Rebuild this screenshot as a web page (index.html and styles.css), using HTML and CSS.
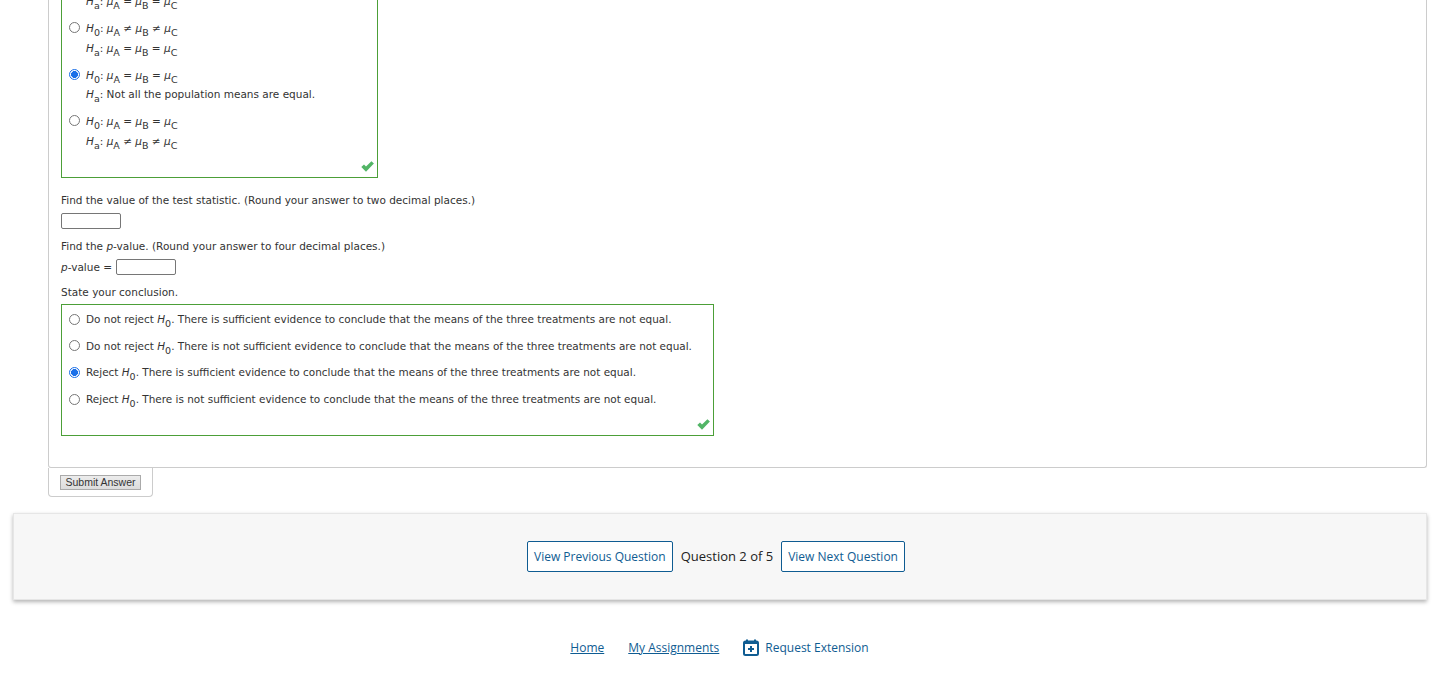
FILE: index.html
```html
<!DOCTYPE html>
<html lang="en">
  <head>
    <meta charset="UTF-8" />
    <title>Question 2 of 5</title>
    <link rel="stylesheet" href="styles.css">
  </head>
  <body>
    <div class="page">
      <div class="question-card">
        <div class="answer-box hypotheses">
          <div class="option partial">
            <div class="option-text">
              <div class="math-line"><i>H</i><sub>a</sub>: <i>μ</i><sub>A</sub> = <i>μ</i><sub>B</sub> = <i>μ</i><sub>C</sub></div>
            </div>
          </div>
          <div class="option">
            <span class="radio"></span>
            <div class="option-text">
              <div class="math-line"><i>H</i><sub>0</sub>: <i>μ</i><sub>A</sub> ≠ <i>μ</i><sub>B</sub> ≠ <i>μ</i><sub>C</sub></div>
              <div class="math-line"><i>H</i><sub>a</sub>: <i>μ</i><sub>A</sub> = <i>μ</i><sub>B</sub> = <i>μ</i><sub>C</sub></div>
            </div>
          </div>
          <div class="option">
            <span class="radio checked"></span>
            <div class="option-text">
              <div class="math-line"><i>H</i><sub>0</sub>: <i>μ</i><sub>A</sub> = <i>μ</i><sub>B</sub> = <i>μ</i><sub>C</sub></div>
              <div class="math-line short"><i>H</i><sub>a</sub>: Not all the population means are equal.</div>
            </div>
          </div>
          <div class="option">
            <span class="radio"></span>
            <div class="option-text">
              <div class="math-line"><i>H</i><sub>0</sub>: <i>μ</i><sub>A</sub> = <i>μ</i><sub>B</sub> = <i>μ</i><sub>C</sub></div>
              <div class="math-line"><i>H</i><sub>a</sub>: <i>μ</i><sub>A</sub> ≠ <i>μ</i><sub>B</sub> ≠ <i>μ</i><sub>C</sub></div>
            </div>
          </div>
          <svg class="check" viewBox="0 0 13 11"><path d="M0.3 6 L3 3.4 L5 5.4 L10.4 0.2 L12.9 2.4 L5 10.8 Z" fill="#52b566"/></svg>
        </div>

        <p class="prompt first">Find the value of the test statistic. (Round your answer to two decimal places.)</p>
        <div class="field"><span class="text-input"></span></div>

        <p class="prompt">Find the <i>p</i>-value. (Round your answer to four decimal places.)</p>
        <div class="field"><span class="field-label"><i>p</i>-value =</span><span class="text-input"></span></div>

        <p class="prompt">State your conclusion.</p>
        <div class="answer-box conclusions">
          <div class="row"><span class="radio"></span><span>Do not reject <i>H</i><sub>0</sub>. There is sufficient evidence to conclude that the means of the three treatments are not equal.</span></div>
          <div class="row"><span class="radio"></span><span>Do not reject <i>H</i><sub>0</sub>. There is not sufficient evidence to conclude that the means of the three treatments are not equal.</span></div>
          <div class="row"><span class="radio checked"></span><span>Reject <i>H</i><sub>0</sub>. There is sufficient evidence to conclude that the means of the three treatments are not equal.</span></div>
          <div class="row"><span class="radio"></span><span>Reject <i>H</i><sub>0</sub>. There is not sufficient evidence to conclude that the means of the three treatments are not equal.</span></div>
          <svg class="check" viewBox="0 0 13 11"><path d="M0.3 6 L3 3.4 L5 5.4 L10.4 0.2 L12.9 2.4 L5 10.8 Z" fill="#52b566"/></svg>
        </div>
      </div>

      <div class="submit-tab"><button class="submit-btn">Submit Answer</button></div>

      <div class="question-nav">
        <a class="nav-btn">View Previous Question</a>
        <span class="nav-count">Question 2 of 5</span>
        <a class="nav-btn">View Next Question</a>
      </div>

      <div class="footer-links">
        <a class="link">Home</a>
        <a class="link">My Assignments</a>
        <a class="extension">
          <svg class="cal" viewBox="0 0 16 17">
            <path d="M4 0.5 V3 M12 0.5 V3" stroke="#0f5c92" stroke-width="2" fill="none"/>
            <rect x="1" y="2.5" width="14" height="13.5" rx="1.5" fill="none" stroke="#0f5c92" stroke-width="2"/>
            <path d="M1 4 H15" stroke="#0f5c92" stroke-width="2"/>
            <path d="M8 7 V13 M5 10 H11" stroke="#0f5c92" stroke-width="2"/>
          </svg>
          Request Extension
        </a>
      </div>
    </div>
  </body>
</html>
```

FILE: styles.css
```css
body {
  margin: 0;
  background-color: #fff;
  font-family: "DejaVu Sans", Verdana, sans-serif;
  font-size: 10.5px;
  color: #333;
  overflow: hidden;
}

/* the reference is scrolled, so the top of the question sits above the window */
.page {
  margin-top: -20px;
}

i {
  font-style: italic;
}

sub {
  font-size: 9.5px;
  line-height: 0;
  vertical-align: -4px;
}

.question-card {
  margin: 0 12px 0 48px;
  padding: 0 12px 31px 12px;
  border: 1px solid #ccc;
  border-top: none;
  border-radius: 0 0 3px 3px;
}

.answer-box {
  position: relative;
  border: 1px solid #4c9f38;
  box-sizing: border-box;
}

.hypotheses {
  width: 317px;
  height: 198px;
  padding-top: 12px;
}

.conclusions {
  width: 653px;
  height: 132px;
  padding-top: 1px;
  font-size: 10.46px;
}

.option {
  display: flex;
  height: 46.5px;
  padding-left: 7px;
}

.option.partial {
  height: 27px;
  padding-left: 18px;
}

.option-text {
  margin: -2px 0 0 6px;
}

.math-line {
  height: 20px;
  line-height: 20px;
  white-space: nowrap;
}

.math-line.short {
  height: 18px;
  line-height: 18px;
}

.radio {
  flex: none;
  width: 11px;
  height: 11px;
  margin-top: 2px;
  box-sizing: border-box;
  border: 1px solid #767676;
  border-radius: 50%;
  background-color: #fff;
}

.radio.checked {
  border: 1px solid #1a6fe8;
  background: radial-gradient(circle, #1a6fe8 0 3.2px, #fff 3.7px);
}

.check {
  position: absolute;
  right: 3px;
  bottom: 5px;
  width: 13px;
  height: 11px;
}

.prompt {
  margin: 0;
  height: 16px;
  line-height: 14px;
  padding-top: 10px;
  white-space: nowrap;
}

.prompt.first {
  padding-top: 15px;
}

.field {
  display: flex;
  align-items: center;
  margin-top: 4px;
  height: 16px;
}

.field-label {
  margin-right: 4px;
}

.text-input {
  width: 60px;
  height: 16px;
  box-sizing: border-box;
  border: 1px solid #767676;
  border-radius: 2px;
  background-color: #fff;
}

.prompt + .answer-box {
  margin-top: 3px;
}

.row {
  display: flex;
  height: 26.6px;
  align-items: center;
  padding-left: 7px;
  white-space: nowrap;
}

.row .radio {
  margin: 0 6px 0 0;
}

.submit-tab {
  margin-left: 48px;
  width: 105px;
  height: 29px;
  box-sizing: border-box;
  padding: 7px 0 0 11px;
  border: 1px solid #ccc;
  border-top: none;
  border-radius: 0 0 4px 4px;
}

.submit-btn {
  display: block;
  width: 81px;
  height: 15px;
  padding: 0;
  border: 1px solid #aaa;
  border-radius: 0;
  background: linear-gradient(#ececec, #dcdcdc);
  font-family: "Liberation Sans", Arial, sans-serif;
  font-size: 10.5px;
  line-height: 13px;
  color: #333;
}

.question-nav {
  display: flex;
  align-items: center;
  justify-content: center;
  height: 87px;
  box-sizing: border-box;
  margin: 16px 12px 0 13px;
  padding-right: 8px;
  border: 1px solid #e6e6e6;
  background-color: #f7f7f7;
  box-shadow: 0 2px 4px rgba(0, 0, 0, 0.3);
  font-family: "Open Sans", sans-serif;
}

.nav-btn {
  height: 31px;
  line-height: 29px;
  box-sizing: border-box;
  padding: 0 6px;
  border: 1px solid #0f5c92;
  border-radius: 2px;
  background-color: #fff;
  font-size: 12px;
  color: #0f5c92;
}

.nav-count {
  margin: 0 8px 2px;
  font-size: 13px;
  color: #222;
}

.footer-links {
  display: flex;
  justify-content: center;
  align-items: center;
  margin-top: 39px;
  gap: 24px;
  font-family: "Open Sans", sans-serif;
  font-size: 12px;
  color: #0f5c92;
}

.link {
  text-decoration: underline;
}

.extension {
  display: flex;
  align-items: center;
  gap: 6px;
}

.cal {
  width: 16px;
  height: 17px;
}
```
